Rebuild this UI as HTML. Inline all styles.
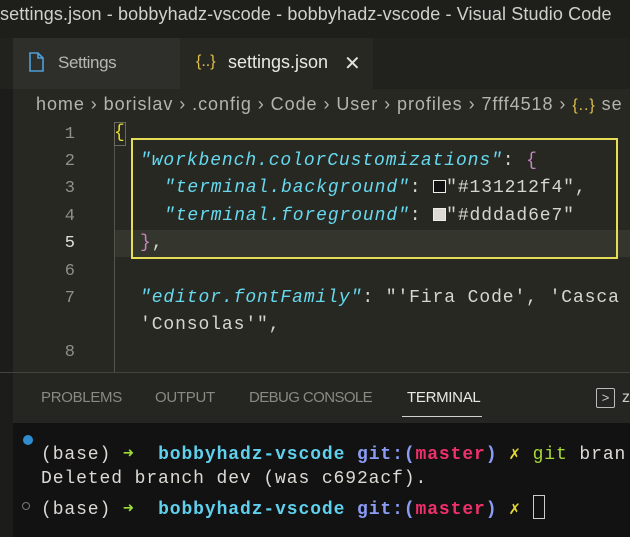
<!DOCTYPE html>
<html><head><meta charset="utf-8"><style>
*{margin:0;padding:0;box-sizing:border-box}
body{width:630px;height:537px;overflow:hidden;background:#272822;font-family:"Liberation Sans",sans-serif;position:relative}
.abs{position:absolute;white-space:pre}
.mono{font-family:"Liberation Mono",monospace;font-size:18px;letter-spacing:0.9px}
.k{color:#66d9ef;font-style:italic}
.w{color:#d6d6d0}
.p{color:#c586c0}
.ln{color:#8f908a;font-family:"Liberation Mono",monospace;font-size:17px;width:30px;text-align:right;left:45px}
.pt{font-size:15px;color:#8a8a82;letter-spacing:-0.3px}
</style></head><body>
<div class="abs" style="left:0;top:0;width:630px;height:38px;background:#1e1e1b"></div>
<div class="abs" style="left:0;top:4px;font-size:18px;color:#d0d0cc;letter-spacing:0.12px">settings.json - bobbyhadz-vscode - bobbyhadz-vscode - Visual Studio Code</div>
<div class="abs" style="left:0;top:38px;width:630px;height:51px;background:#21211e"></div>
<div class="abs" style="left:13px;top:38px;width:167px;height:51px;background:#2e2e2a"></div>
<div class="abs" style="left:180px;top:38px;width:193px;height:51px;background:#272822"></div>
<svg class="abs" style="left:28px;top:52px" width="16" height="20" viewBox="0 0 16 20"><path d="M2 1h8l5 5v13H2z M10 1v5h5" fill="none" stroke="#4f9fd8" stroke-width="1.6"/></svg>
<div class="abs" style="left:58px;top:53px;font-size:17px;color:#b8b8b2;letter-spacing:-0.4px">Settings</div>
<div class="abs" style="left:196px;top:53px;font-size:16px;color:#e2c04a">{..}</div>
<div class="abs" style="left:228px;top:52px;font-size:18px;color:#e8e8e4">settings.json</div>
<div class="abs" style="left:344px;top:51px;font-size:20px;color:#e0e0dc">✕</div>
<div class="abs" style="left:0;top:89px;width:13px;height:285px;background:#1c1c1a"></div>
<div class="abs" style="left:36px;top:94px;font-size:18px;color:#b4b4ae;letter-spacing:0.95px">home › borislav › .config › Code › User › profiles › 7fff4518 › <span style="color:#e2c04a;font-size:16px">{..}</span> se</div>
<div class="abs" style="left:114px;top:146px;width:1px;height:226px;background:#55554f"></div>
<div class="abs" style="left:115px;top:230px;width:515px;height:27px;background:#34352d"></div>
<div class="abs" style="left:131px;top:138px;width:487px;height:121px;border:2px solid #e6dc55"></div>
<div class="abs" style="left:114px;top:122px;width:12px;height:24px;border:1px solid #6a6a60"></div>
<div class="abs ln" style="top:125px">1</div>
<div class="abs ln" style="top:152px">2</div>
<div class="abs ln" style="top:179px">3</div>
<div class="abs ln" style="top:207px">4</div>
<div class="abs ln" style="top:234px;color:#e0e0da">5</div>
<div class="abs ln" style="top:262px">6</div>
<div class="abs ln" style="top:289px">7</div>
<div class="abs ln" style="top:343px">8</div>
<div class="abs mono" style="left:114px;top:123px;color:#e6db34">{</div>
<div class="abs mono w" style="left:140px;top:151px"><span class="k">"workbench.colorCustomizations"</span>: <span class="p">{</span></div>
<div class="abs mono w" style="left:164px;top:178px"><span class="k">"terminal.background"</span>: <span style="display:inline-block;width:13px;height:13px;border:1.5px solid #eee;background:#131212;vertical-align:-1px"></span>"#131212f4",</div>
<div class="abs mono w" style="left:164px;top:206px"><span class="k">"terminal.foreground"</span>: <span style="display:inline-block;width:13px;height:13px;border:1.5px solid #eee;background:#dddad6;vertical-align:-1px"></span>"#dddad6e7"</div>
<div class="abs mono w" style="left:140px;top:233px"><span class="p">}</span>,</div>
<div class="abs mono w" style="left:140px;top:288px"><span class="k">"editor.fontFamily"</span>: "'Fira Code', 'Casca</div>
<div class="abs mono w" style="left:140px;top:315px">'Consolas'",</div>
<div class="abs" style="left:0;top:372px;width:630px;height:1px;background:#44443e"></div>
<div class="abs" style="left:0;top:373px;width:13px;height:164px;background:#1c1c1a"></div>
<div class="abs" style="left:13px;top:373px;width:617px;height:50px;background:#252521"></div>
<div class="abs pt" style="left:41px;top:389px">PROBLEMS</div>
<div class="abs pt" style="left:155px;top:389px">OUTPUT</div>
<div class="abs pt" style="left:249px;top:389px;letter-spacing:-0.6px">DEBUG CONSOLE</div>
<div class="abs pt" style="left:407px;top:389px;color:#e8e8e4">TERMINAL</div>
<div class="abs" style="left:402px;top:416px;width:80px;height:1px;background:#d0d0cc"></div>
<div class="abs" style="left:596px;top:388px;width:19px;height:20px;border:1.5px solid #bbb;border-radius:2px;color:#ccc;font-size:13px;text-align:center;line-height:17px">&gt;</div>
<div class="abs" style="left:622px;top:389px;font-size:16px;color:#ccc">z</div>
<div class="abs" style="left:13px;top:423px;width:617px;height:114px;background:#131212"></div>
<div class="abs" style="left:23px;top:435px;width:10px;height:10px;border-radius:50%;background:#2e8ccf"></div>
<div class="abs" style="left:22px;top:502px;width:8px;height:8px;border-radius:50%;border:1.5px solid #777"></div>
<div class="abs mono" style="left:41px;top:443px;color:#dddad6">(base) <span style="color:#9cdc3a">➜</span>  <b style="color:#5fd0ee">bobbyhadz-vscode</b> <b style="color:#8a9cf5">git:(</b><b style="color:#f0306a">master</b><b style="color:#8a9cf5">)</b> <span style="color:#e6db34">✗</span> <span style="color:#a6d83a">git</span> bran</div>
<div class="abs mono" style="left:41px;top:469px;color:#dddad6">Deleted branch dev (was c692acf).</div>
<div class="abs mono" style="left:41px;top:495px;color:#dddad6">(base) <span style="color:#9cdc3a">➜</span>  <b style="color:#5fd0ee">bobbyhadz-vscode</b> <b style="color:#8a9cf5">git:(</b><b style="color:#f0306a">master</b><b style="color:#8a9cf5">)</b> <span style="color:#e6db34">✗</span> <span style="display:inline-block;width:12px;height:24px;border:1.5px solid #ccc;vertical-align:-5px"></span></div>
</body></html>
